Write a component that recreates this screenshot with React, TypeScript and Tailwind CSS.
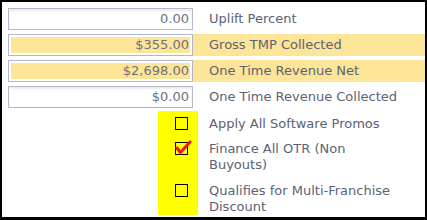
const fields = [
  { value: '0.00', label: 'Uplift Percent', hl: false },
  { value: '$355.00', label: 'Gross TMP Collected', hl: true },
  { value: '$2,698.00', label: 'One Time Revenue Net', hl: true },
  { value: '$0.00', label: 'One Time Revenue Collected', hl: false },
]

const options = [
  { label: 'Apply All Software Promos', checked: false, pt: 'pt-[5px]' },
  { label: 'Finance All OTR (Non Buyouts)', checked: true, pt: 'pt-[9px]' },
  { label: 'Qualifies for Multi-Franchise Discount', checked: false, pt: 'pt-[10px]' },
]

function Box({ checked }: { checked: boolean }) {
  return (
    <span className="relative mt-px block h-[13px] w-[13px] border border-black">
      {checked && (
        <svg className="absolute -left-[1px] -top-[4px]" width="18" height="17" viewBox="0 0 18 17">
          <path d="M2 9 L5.5 13.5 L15 3" fill="none" stroke="#ee1c24" strokeWidth="3.2" strokeLinecap="round" strokeLinejoin="round" />
        </svg>
      )}
    </span>
  )
}

export default function App() {
  return (
    <div className="box-border h-[220px] w-[427px] border-2 border-b-[3px] border-black bg-white pl-[6px] pt-[6px] font-['DejaVu_Sans',Verdana,sans-serif] text-[13px]">
      <div className="flex flex-col gap-[4px]">
        {fields.map((f) => (
          <div key={f.label} className="flex h-[22px]">
            <div
              className={`box-border flex h-[22px] w-[185px] items-center justify-end border border-[#b4b6c9] p-[2px] ${f.hl ? 'bg-white' : 'bg-white shadow-[inset_0_2px_2px_rgba(0,0,0,0.08)]'}`}
            >
              <div className={`flex h-full w-full items-center justify-end pr-[1px] text-[#6e7080] ${f.hl ? 'bg-[#fde597]' : ''}`}>
                {f.value}
              </div>
            </div>
            <div className={`flex flex-1 items-center pl-[16px] text-[#5b6275] ${f.hl ? 'bg-[#fde597]' : ''}`}>
              {f.label}
            </div>
          </div>
        ))}
      </div>

      <div className="mt-[3px] flex">
        <div className="w-[150px]" />
        <div className="flex flex-col">
          {options.map((o) => (
            <div key={o.label} className="flex">
              <div className={`flex w-[40px] justify-end bg-[#ffff00] pr-[10px] ${o.pt}`}>
                <Box checked={o.checked} />
              </div>
              <div className={`w-[200px] pl-[11px] leading-[16px] text-[#5b6275] ${o.pt}`}>{o.label}</div>
            </div>
          ))}
        </div>
      </div>
    </div>
  )
}
